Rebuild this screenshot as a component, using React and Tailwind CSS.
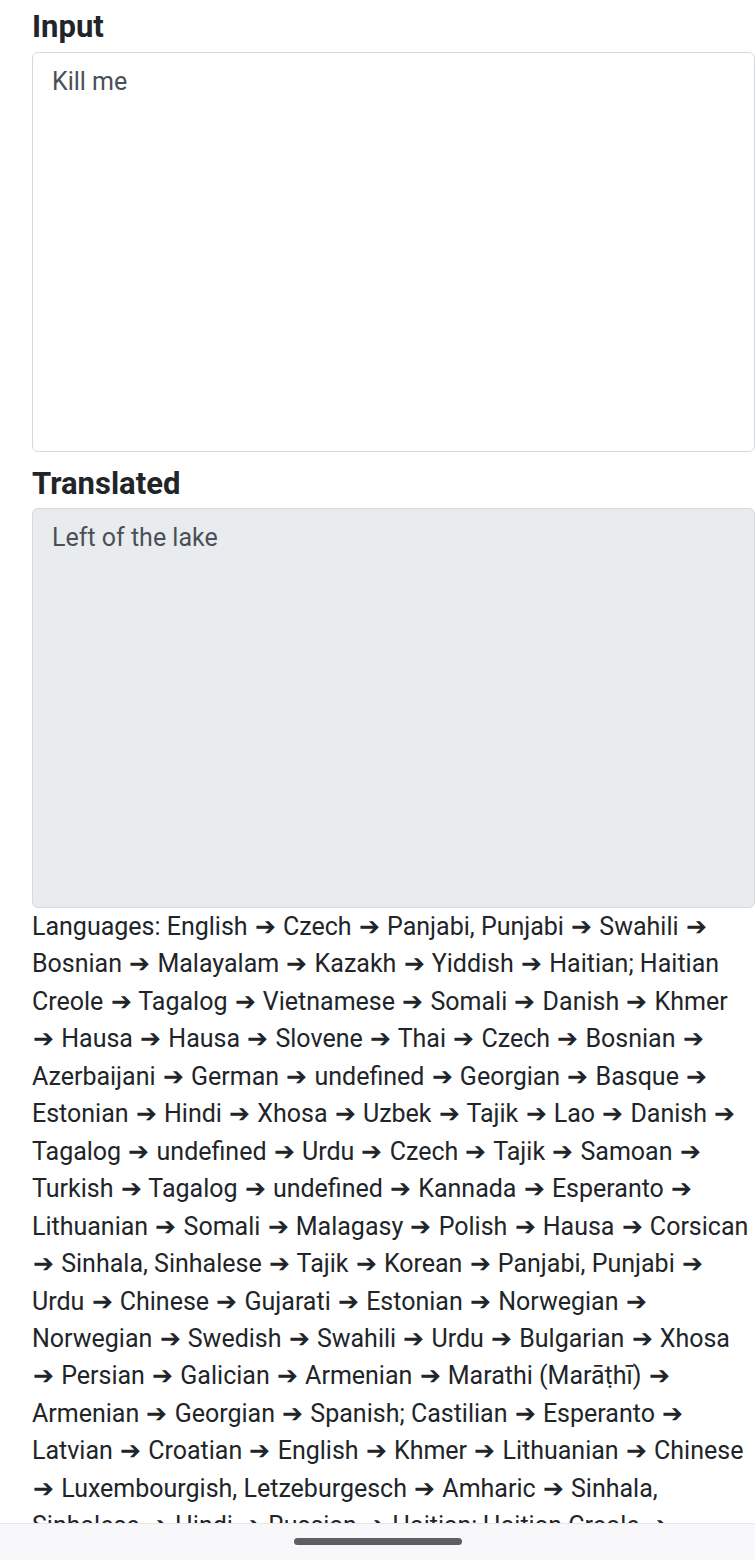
export default function App() {
  const langs =
    "Languages: English ➔ Czech ➔ Panjabi, Punjabi ➔ Swahili ➔ Bosnian ➔ Malayalam ➔ Kazakh ➔ Yiddish ➔ Haitian; Haitian Creole ➔ Tagalog ➔ Vietnamese ➔ Somali ➔ Danish ➔ Khmer ➔ Hausa ➔ Hausa ➔ Slovene ➔ Thai ➔ Czech ➔ Bosnian ➔ Azerbaijani ➔ German ➔ undefined ➔ Georgian ➔ Basque ➔ Estonian ➔ Hindi ➔ Xhosa ➔ Uzbek ➔ Tajik ➔ Lao ➔ Danish ➔ Tagalog ➔ undefined ➔ Urdu ➔ Czech ➔ Tajik ➔ Samoan ➔ Turkish ➔ Tagalog ➔ undefined ➔ Kannada ➔ Esperanto ➔ Lithuanian ➔ Somali ➔ Malagasy ➔ Polish ➔ Hausa ➔ Corsican ➔ Sinhala, Sinhalese ➔ Tajik ➔ Korean ➔ Panjabi, Punjabi ➔ Urdu ➔ Chinese ➔ Gujarati ➔ Estonian ➔ Norwegian ➔ Norwegian ➔ Swedish ➔ Swahili ➔ Urdu ➔ Bulgarian ➔ Xhosa ➔ Persian ➔ Galician ➔ Armenian ➔ Marathi (Marāṭhī) ➔ Armenian ➔ Georgian ➔ Spanish; Castilian ➔ Esperanto ➔ Latvian ➔ Croatian ➔ English ➔ Khmer ➔ Lithuanian ➔ Chinese ➔ Luxembourgish, Letzeburgesch ➔ Amharic ➔ Sinhala, Sinhalese ➔ Hindi ➔ Russian ➔ Haitian; Haitian Creole ➔ English";
  const parts = langs.split("➔");
  return (
    <div
      className="w-[755px] h-[1560px] overflow-hidden bg-white relative"
      style={{ fontFamily: 'Roboto, "Liberation Sans", sans-serif' }}
    >
      <div className="ml-[32px] w-[723px] pt-[8px]">
        <h2 className="text-[31px] leading-[37.5px] font-bold text-[#212529] mb-[6.5px]">
          Input
        </h2>
        <div className="h-[400px] border border-[#d6d9dc] rounded-[6px] bg-white px-[19px] py-[9.5px] text-[25px] leading-[37.5px] text-[#495057]">
          Kill me
        </div>
        <h2 className="mt-[12.5px] text-[31px] leading-[37.5px] font-bold text-[#212529] mb-[6px]">
          Translated
        </h2>
        <div className="h-[400px] border border-[#d6d9dc] rounded-[6px] bg-[#e9ecef] px-[19px] py-[9.5px] text-[25px] leading-[37.5px] text-[#495057]">
          Left of the lake
        </div>
        <p className="text-[25px] leading-[37.45px] text-[#212529]">
          {parts.map((p, i) => (
            <span key={i}>
              {p}
              {i < parts.length - 1 && <span className="px-[1px]">➔</span>}
            </span>
          ))}
        </p>
      </div>
      <div className="absolute left-0 bottom-0 w-[755px] h-[37px] bg-[#f8f7fa] border-t border-[#e8e6ea] flex items-start justify-center">
        <div className="mt-[14px] w-[168px] h-[7px] rounded-full bg-[#5f5f61]" />
      </div>
    </div>
  );
}
